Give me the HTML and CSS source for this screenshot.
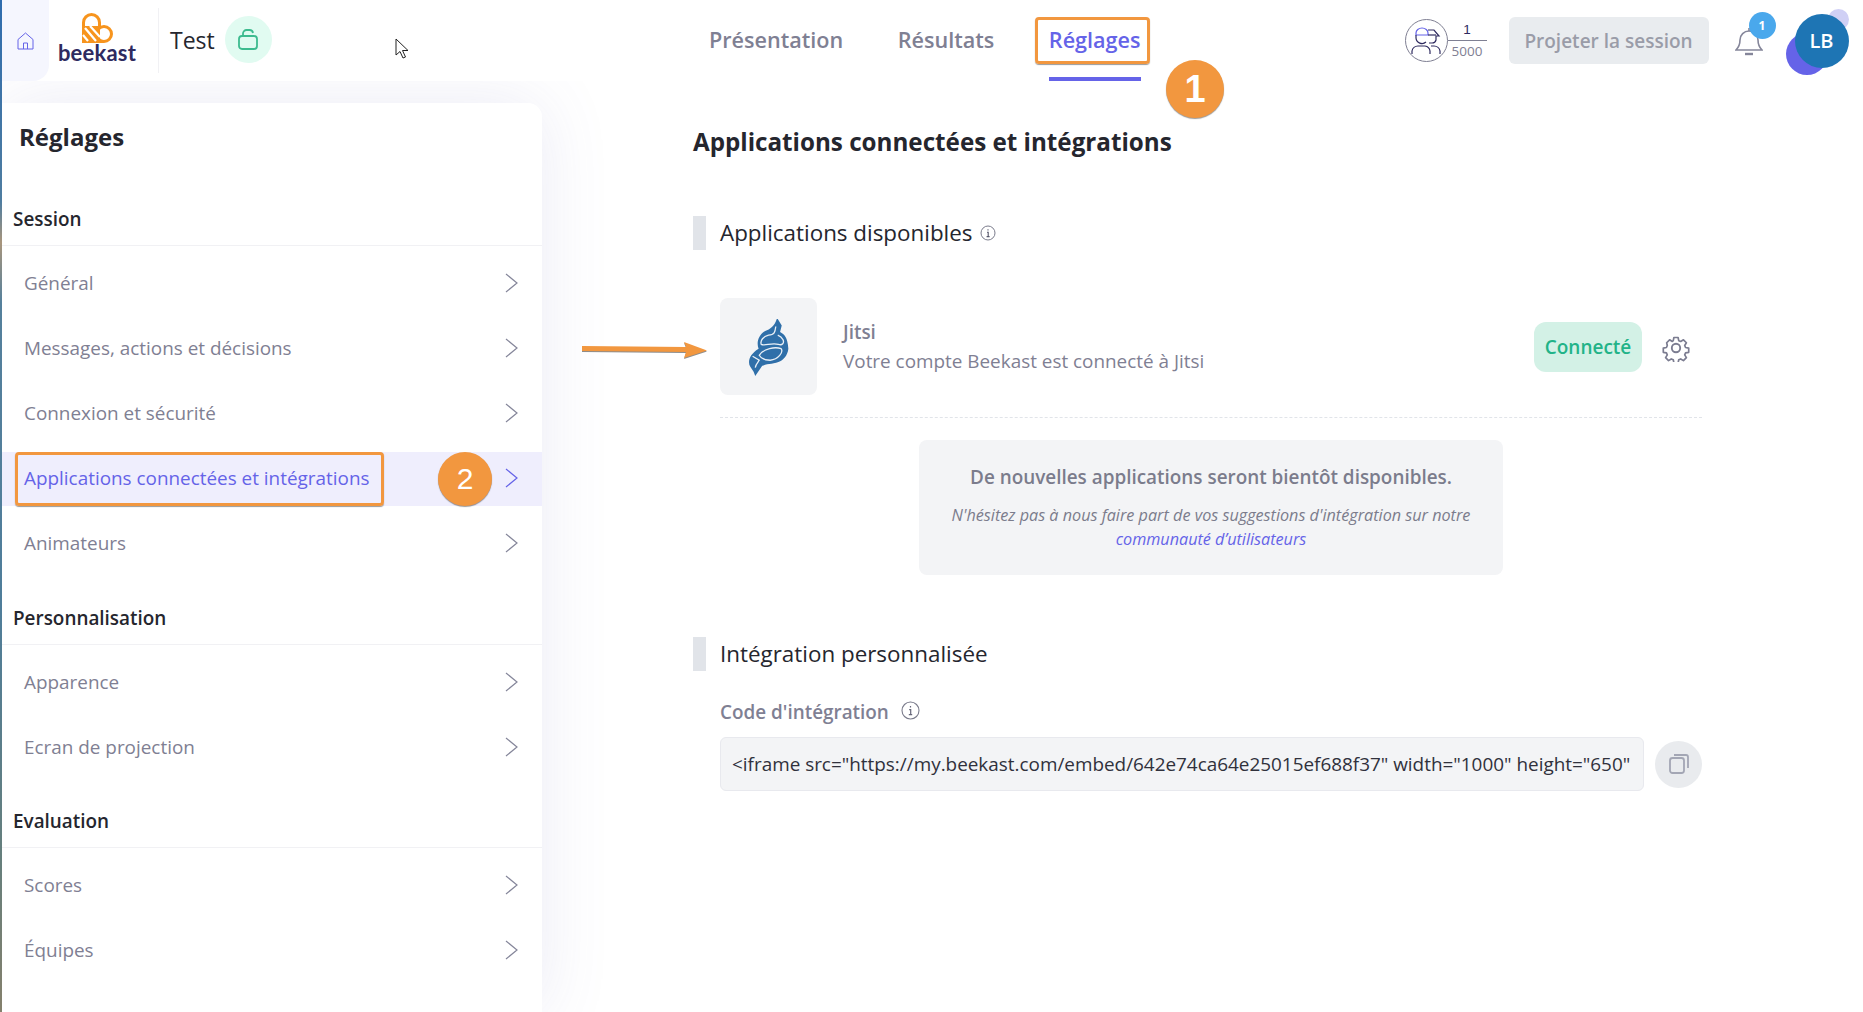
FILE: index.html
```html
<!DOCTYPE html>
<html lang="fr">
<head>
    <meta charset="UTF-8">
    <title>Beekast - Réglages</title>
    <link rel="stylesheet" href="styles.css">
</head>
<body>
<div class="page">

    <!-- Top bar -->
    <header class="topbar">
        <a class="home-tile">
            <svg width="17" height="18" viewBox="0 0 17 18" fill="none" stroke="#6563e8" stroke-width="1"><path d="M1 7.500 8.500 1 16 7.500V17H1Z"/><path d="M6.500 17v-6h4v6"/></svg>
        </a>
        <div class="logo">
            <svg width="31" height="30" viewBox="0 0 31 30">
                <path d="M1.500 16V9.500a8 8 0 0 1 16 0V15" fill="none" stroke="#f7941d" stroke-width="3"/>
                <circle cx="22" cy="21" r="7.500" fill="none" stroke="#f7941d" stroke-width="3"/>
                <path d="M0 13h18v17H0Z" fill="#f7941d"/>
                <path d="M18 27h4v3h-4Z" fill="#f7941d"/>
                <path d="M8 13l10 11M3 15l11 13M1 22l5 6" stroke="#fff" stroke-width="2.200"/>
            </svg>
            <span>beekast</span>
        </div>
        <div class="session-name">
            <span>Test</span>
            <span class="lock-badge">
                <svg width="20" height="21" viewBox="0 0 20 21" fill="none" stroke="#3dbb8f" stroke-width="1.800"><rect x="1" y="7" width="18" height="13" rx="3"/><path d="M5 7V4.500A3.500 3.500 0 0 1 8.500 1h3A3.500 3.500 0 0 1 15 4"/></svg>
            </span>
        </div>
        <nav class="tabs">
            <a class="tab">Présentation</a>
            <a class="tab">Résultats</a>
            <a class="tab tab-active">Réglages</a>
        </nav>
        <div class="top-right">
            <div class="participants">
                <span class="participants-icon">
                    <svg width="30" height="28" viewBox="0 0 30 28" fill="none" stroke-width="1.200"><path d="M5 6a6 5 0 0 1 12 0v2H5Z" stroke="#6563e8"/><path d="M5 8v3a6 6 0 0 0 10 4" stroke="#2e2a5f"/><path d="M17 3h6l5 6h-3v4a4 4 0 0 1-4 3h-3" stroke="#2e2a5f"/><path d="M17 8h8" stroke="#2e2a5f"/><path d="M1 27v-3a6 6 0 0 1 6-5h7a6 6 0 0 1 5 5v3M20 19h3a6 6 0 0 1 6 5v3" stroke="#2e2a5f"/></svg>
                </span>
                <span class="participants-count"><b>1</b><i>5000</i></span>
            </div>
            <button class="project-btn">Projeter la session</button>
            <div class="bell">
                <svg width="28" height="30" viewBox="0 0 28 30" fill="none" stroke="#85869a" stroke-width="1.600"><path d="M1 24c3-3 4-5 4-10a9 9 0 0 1 18 0c0 5 1 7 4 10Z"/><path d="M14 5V2"/><path d="M10 28h8" stroke-width="2.400"/></svg>
                <span class="bell-badge">1</span>
            </div>
            <div class="avatar">
                <span class="avatar-dot-big"></span>
                <span class="avatar-dot-small"></span>
                <span class="avatar-main">LB</span>
            </div>
        </div>
    </header>

    <div class="content">

        <!-- Settings menu -->
        <aside class="sidebar">
            <h2 class="sidebar-title">Réglages</h2>

            <h3 class="menu-title">Session</h3>
            <a class="menu-item">Général<svg class="chevron" viewBox="0 0 13 20"><path d="M1 1l11 9-11 9"/></svg></a>
            <a class="menu-item">Messages, actions et décisions<svg class="chevron" viewBox="0 0 13 20"><path d="M1 1l11 9-11 9"/></svg></a>
            <a class="menu-item">Connexion et sécurité<svg class="chevron" viewBox="0 0 13 20"><path d="M1 1l11 9-11 9"/></svg></a>
            <a class="menu-item menu-item-active">Applications connectées et intégrations<svg class="chevron" viewBox="0 0 13 20"><path d="M1 1l11 9-11 9"/></svg></a>
            <a class="menu-item">Animateurs<svg class="chevron" viewBox="0 0 13 20"><path d="M1 1l11 9-11 9"/></svg></a>

            <h3 class="menu-title">Personnalisation</h3>
            <a class="menu-item">Apparence<svg class="chevron" viewBox="0 0 13 20"><path d="M1 1l11 9-11 9"/></svg></a>
            <a class="menu-item">Ecran de projection<svg class="chevron" viewBox="0 0 13 20"><path d="M1 1l11 9-11 9"/></svg></a>

            <h3 class="menu-title">Evaluation</h3>
            <a class="menu-item">Scores<svg class="chevron" viewBox="0 0 13 20"><path d="M1 1l11 9-11 9"/></svg></a>
            <a class="menu-item">Équipes<svg class="chevron" viewBox="0 0 13 20"><path d="M1 1l11 9-11 9"/></svg></a>
        </aside>

        <!-- Main panel -->
        <main class="main">
            <h1 class="main-title">Applications connectées et intégrations</h1>

            <div class="section-head">
                <span class="section-bar"></span>
                <h2>Applications disponibles</h2>
                <svg class="info-icon" width="16" height="16" viewBox="0 0 16 16"><circle cx="8" cy="8" r="7" fill="none" stroke="#7b7c8c"/><path d="M8 4.200v1.400M7 7.200h1.200v4.400M6.600 11.600h3" fill="none" stroke="#55566a" stroke-width="1.100"/></svg>
            </div>

            <div class="section-body">
                <div class="app-row">
                    <div class="app-tile">
                        <svg width="43" height="60" viewBox="35 30 130 180" fill="none">
                            <path d="M128 35 140 55 135 75C148 82 158 92 160 125 158 145 145 160 130 165 112 172 90 170 80 178L60 208 55 195 45 180C36 165 42 142 70 125 62 105 72 82 90 72 105 65 118 58 125 35Z" fill="#2f6fa9"/>
                            <path d="M122 58C120 75 118 84 100 84 85 88 74 100 78 112 90 118 108 106 130 112 142 116 148 108 144 98 140 90 134 86 128 84" stroke="#e8eff6" stroke-width="4"/>
                            <path d="M72 145C85 125 120 118 138 125 146 135 130 158 105 160 90 160 78 155 72 145Z" stroke="#e8eff6" stroke-width="4"/>
                            <path d="M52 148 72 160C68 166 62 172 60 182" stroke="#e8eff6" stroke-width="4"/>
                        </svg>
                    </div>
                    <div class="app-text">
                        <div class="app-name">Jitsi</div>
                        <div class="app-desc">Votre compte Beekast est connecté à Jitsi</div>
                    </div>
                    <span class="status-pill">Connecté</span>
                    <svg class="gear" width="28" height="28" viewBox="0 0 24 24" fill="none" stroke="#7b7c90" stroke-width="1.600" stroke-linejoin="round"><circle cx="12" cy="12" r="3.600"/><path d="M10 2h4l.6 3 1.900.8 2.600-1.600 2.800 2.800-1.600 2.600.8 1.900 3 .6v4l-3 .6-.8 1.900 1.600 2.600-2.800 2.800-2.600-1.600-1.900.8-.6 3h-4l-.6-3-1.900-.8-2.600 1.600-2.800-2.800 1.600-2.600-.8-1.900-3-.6v-4l3-.6.8-1.900L3.100 7 5.900 4.200 8.500 5.800l.9-.8Z" transform="translate(1.200 1.200) scale(.9)"/></svg>
                </div>

                <div class="notice">
                    <div class="notice-title">De nouvelles applications seront bientôt disponibles.</div>
                    <div class="notice-text">N'hésitez pas à nous faire part de vos suggestions d'intégration sur notre<br><a>communauté d’utilisateurs</a></div>
                </div>
            </div>

            <div class="section-head section-head-second">
                <span class="section-bar"></span>
                <h2>Intégration personnalisée</h2>
            </div>

            <div class="section-body">
                <div class="code-label">
                    <span>Code d'intégration</span>
                    <svg width="19" height="19" viewBox="0 0 19 19"><circle cx="9.500" cy="9.500" r="8.500" fill="none" stroke="#7b7c8c" stroke-width="1.100"/><path d="M9.500 5v1.500M8.200 8.700h1.500v5M7.800 13.700h3.400" fill="none" stroke="#66677a" stroke-width="1.200"/></svg>
                </div>
                <div class="code-row">
                    <div class="code-input">&lt;iframe src="https://my.beekast.com/embed/642e74ca64e25015ef688f37" width="1000" height="650"</div>
                    <button class="copy-btn">
                        <svg width="20" height="20" viewBox="0 0 20 20" fill="none" stroke="#a3a6b4" stroke-width="1.800"><rect x="1" y="4" width="14" height="15" rx="2.500"/><path d="M5 1h12a2 2 0 0 1 2 2v11"/></svg>
                    </button>
                </div>
            </div>
        </main>
    </div>

    <!-- Tutorial annotations drawn over the screenshot -->
    <span class="note-box note-box-tab"></span>
    <span class="note-box note-box-item"></span>
    <span class="note-number note-one">1</span>
    <span class="note-number note-two">2</span>
    <svg class="note-arrow" width="126" height="20" viewBox="0 0 126 20"><path d="M0 5 104 6 102 1 125 9.500 102 17 104 11 0 10Z" fill="#f2973f"/></svg>
    <svg class="mouse-cursor" width="14" height="21" viewBox="0 0 14 21"><path d="M1 1v16l4-3.500 3 6.500 2.500-1-3-6.500H13Z" fill="#fff" stroke="#222" stroke-width="1"/></svg>

</div>
</body>
</html>
```

FILE: styles.css
```css
* {
    box-sizing: border-box;
}

body {
    margin: 0;
    font-family: "Open Sans", sans-serif;
    background-color: white;
    color: #25262e;
}

.page {
    position: relative;
    width: 1863px;
    height: 1012px;
    overflow: hidden;
    border-left: 2px solid #3a6f9c;
    border-image: linear-gradient(#2f6cae, #4f7da0 20%, #a8957c 24%, #55809c 30%, #4f7d9a 60%, #667f7c 85%, #85806c) 1;
}

/* Top bar */
.topbar {
    position: relative;
    z-index: 2;
    display: flex;
    align-items: center;
    height: 81px;
    background-color: white;
}

.home-tile {
    display: flex;
    align-items: center;
    justify-content: center;
    width: 47px;
    height: 81px;
    background-color: #f5f6fe;
    border-bottom-right-radius: 16px;
}

.logo {
    display: flex;
    flex-direction: column;
    align-items: center;
    width: 76px;
    margin-left: 10px;
    padding-bottom: 5px;
}

.logo span {
    font-family: "Lato", sans-serif;
    font-weight: 700;
    font-size: 22px;
    line-height: 20px;
    letter-spacing: 0.2px;
    color: #2e2a5f;
}

.session-name {
    display: flex;
    align-items: center;
    height: 65px;
    margin-left: 23px;
    padding-left: 11px;
    padding-bottom: 2px;
    border-left: 1px solid #f1f1f4;
    font-size: 23px;
    gap: 10px;
    width: 551px;
}

.lock-badge {
    display: flex;
    align-items: center;
    justify-content: center;
    width: 47px;
    height: 47px;
    border-radius: 50%;
    background-color: #e1fbf1;
}

.tabs {
    display: flex;
    align-items: center;
    height: 81px;
    gap: 54.5px;
}

.tab {
    display: flex;
    align-items: center;
    height: 81px;
    font-size: 21.6px;
    font-weight: 600;
    color: #7f8093;
    border-bottom: 4px solid transparent;
    padding-top: 2px;
}

.tab-active {
    color: #6563e8;
    border-bottom-color: #6563e8;
}

.top-right {
    display: flex;
    align-items: center;
    margin-left: 264px;
}

.participants {
    display: flex;
    align-items: center;
}

.participants-icon {
    display: flex;
    align-items: center;
    justify-content: center;
    width: 43px;
    height: 43px;
    border: 1px solid #7f8093;
    border-radius: 50%;
}

.participants-count {
    display: flex;
    flex-direction: column;
    align-items: center;
    width: 39px;
    font-size: 13.5px;
    line-height: 20px;
}

.participants-count b {
    font-family: "Liberation Sans", sans-serif;
    font-weight: 400;
    color: #2e2a5f;
    width: 100%;
    text-align: center;
    border-bottom: 1px solid #7f8093;
}

.participants-count i {
    font-style: normal;
    color: #7f8093;
}

.project-btn {
    width: 200px;
    height: 47px;
    margin-left: 22px;
    border: none;
    border-radius: 6px;
    background-color: #e9ecef;
    color: #9a9ca8;
    font-family: "Open Sans", sans-serif;
    font-size: 19px;
    font-weight: 600;
}

.bell {
    position: relative;
    width: 28px;
    height: 30px;
    margin-left: 26px;
}

.bell-badge {
    position: absolute;
    top: -14px;
    left: 14px;
    width: 27px;
    height: 27px;
    border-radius: 50%;
    background-color: #4aa8ec;
    color: white;
    font-size: 12px;
    font-weight: 700;
    line-height: 27px;
    text-align: center;
}

.avatar {
    position: relative;
    width: 54px;
    height: 54px;
    margin-left: 32px;
}

.avatar-main {
    position: absolute;
    top: 0;
    left: 0;
    display: block;
    width: 54px;
    height: 54px;
    border-radius: 50%;
    background-color: #1e75b4;
    color: white;
    font-size: 20px;
    font-weight: 600;
    line-height: 54px;
    text-align: center;
}

.avatar-dot-big {
    position: absolute;
    top: 19px;
    left: -9px;
    width: 42px;
    height: 42px;
    border-radius: 50%;
    background-color: #6563e8;
}

.avatar-dot-small {
    position: absolute;
    top: -5px;
    left: 33px;
    width: 21px;
    height: 21px;
    border-radius: 50%;
    background-color: #d0d0f5;
}

/* Page below the top bar */
.content {
    display: flex;
    align-items: flex-start;
}

/* Settings menu */
.sidebar {
    width: 540px;
    height: 909px;
    margin-top: 22px;
    border-top-right-radius: 14px;
    background-color: white;
    box-shadow: 0 0 70px rgba(90, 90, 170, 0.12);
    flex-shrink: 0;
}

.sidebar-title {
    margin: 0;
    padding: 18px 0 1px 17px;
    font-size: 24px;
    font-weight: 700;
    line-height: 32px;
}

.menu-title {
    margin: 34.5px 0 11px 0;
    padding: 0 0 14px 11px;
    border-bottom: 1px solid #f1f1f4;
    font-size: 18.9px;
    font-weight: 600;
    line-height: 24px;
}

.sidebar-title + .menu-title {
    margin-top: 53px;
}

.menu-item {
    display: flex;
    align-items: center;
    justify-content: space-between;
    height: 54px;
    margin-bottom: 11px;
    padding: 0 24px 2px 22px;
    font-size: 18.9px;
    color: #7f8093;
}

.menu-item:last-child {
    margin-bottom: 0;
}

.menu-item-active {
    background-color: #efeefd;
    color: #6563e8;
}

.chevron {
    width: 13px;
    height: 20px;
    fill: none;
    stroke: #85869a;
    stroke-width: 1.2;
}

.menu-item-active .chevron {
    stroke: #6563e8;
}

/* Main panel */
.main {
    margin-left: 151px;
    width: 1009px;
}

.main-title {
    margin: 45px 0 0 0;
    font-size: 24.2px;
    font-weight: 700;
    line-height: 32px;
}

.section-head {
    display: flex;
    align-items: center;
    height: 34px;
    margin-top: 58px;
}

.section-head h2 {
    margin: 0 0 2px 0;
    font-size: 22.4px;
    font-weight: 500;
}

.section-bar {
    width: 13px;
    height: 34px;
    margin-right: 14px;
    background-color: #e1e4e9;
}

.info-icon {
    margin-left: 7px;
}

.section-head-second {
    margin-top: 62px;
}

.section-body {
    margin-left: 27px;
    width: 982px;
}

.app-row {
    display: flex;
    align-items: center;
    margin-top: 48px;
    padding-bottom: 22px;
    padding-right: 12px;
    border-bottom: 1px dashed #e1e4e9;
}

.app-tile {
    display: flex;
    align-items: center;
    justify-content: center;
    width: 97px;
    height: 97px;
    border-radius: 8px;
    background-color: #f3f4f6;
}

.app-text {
    flex-grow: 1;
    margin-left: 26px;
    font-size: 18.9px;
    color: #7f8093;
    line-height: 29px;
}

.app-name {
    font-weight: 600;
}

.status-pill {
    display: block;
    width: 108px;
    height: 50px;
    border-radius: 12px;
    background-color: #d3f1e6;
    color: #22b388;
    font-size: 19px;
    font-weight: 600;
    line-height: 50px;
    text-align: center;
}

.gear {
    margin-left: 20px;
    margin-top: 2px;
}

.notice {
    width: 584px;
    height: 135px;
    margin: 22px auto 0 auto;
    padding-top: 23px;
    border-radius: 8px;
    background-color: #f3f4f6;
    color: #7b7c8c;
    text-align: center;
}

.notice-title {
    font-size: 18.9px;
    font-weight: 600;
    line-height: 28px;
}

.notice-text {
    margin-top: 12px;
    font-size: 16.2px;
    font-style: italic;
    line-height: 24px;
}

.notice-text a {
    color: #6563e8;
}

.code-label {
    display: flex;
    align-items: center;
    gap: 12px;
    margin-top: 29px;
    font-size: 18.9px;
    font-weight: 600;
    color: #7f8093;
    line-height: 24px;
}

.code-label svg {
    margin-bottom: 4px;
}

.code-row {
    display: flex;
    align-items: center;
    gap: 11px;
    margin-top: 13px;
}

.code-input {
    width: 925px;
    height: 54px;
    padding-left: 11px;
    border: 1px solid #e8e9ee;
    border-radius: 6px;
    background-color: #f3f4f6;
    font-size: 18.9px;
    line-height: 52px;
    white-space: nowrap;
    overflow: hidden;
    color: #30313c;
}

.copy-btn {
    display: flex;
    align-items: center;
    justify-content: center;
    width: 47px;
    height: 47px;
    border: none;
    border-radius: 50%;
    background-color: #e9ebee;
}

/* Tutorial annotations */
.note-box {
    position: absolute;
    border: 3.5px solid #f2973f;
    border-radius: 4px;
    box-shadow: 0 1px 1px rgba(0, 0, 0, 0.4);
    z-index: 3;
}

.note-box-tab {
    top: 17px;
    left: 1033px;
    width: 115px;
    height: 47px;
}

.note-box-item {
    top: 452px;
    left: 13px;
    width: 369px;
    height: 54px;
}

.note-number {
    position: absolute;
    z-index: 3;
    border-radius: 50%;
    background-color: #f2973f;
    color: white;
    font-family: "Liberation Sans", sans-serif;
    text-align: center;
    box-shadow: 0 1px 1px rgba(0, 0, 0, 0.4);
}

.note-one {
    top: 60px;
    left: 1164px;
    width: 58px;
    height: 58px;
    font-size: 38px;
    font-weight: 700;
    line-height: 58px;
}

.note-two {
    top: 452px;
    left: 436px;
    width: 54px;
    height: 54px;
    font-size: 30px;
    line-height: 54px;
}

.note-arrow {
    position: absolute;
    top: 341px;
    left: 580px;
    z-index: 3;
    filter: drop-shadow(0 1px 0 rgba(0, 0, 0, 0.45));
}

.mouse-cursor {
    position: absolute;
    top: 38px;
    left: 393px;
    z-index: 3;
}
```
